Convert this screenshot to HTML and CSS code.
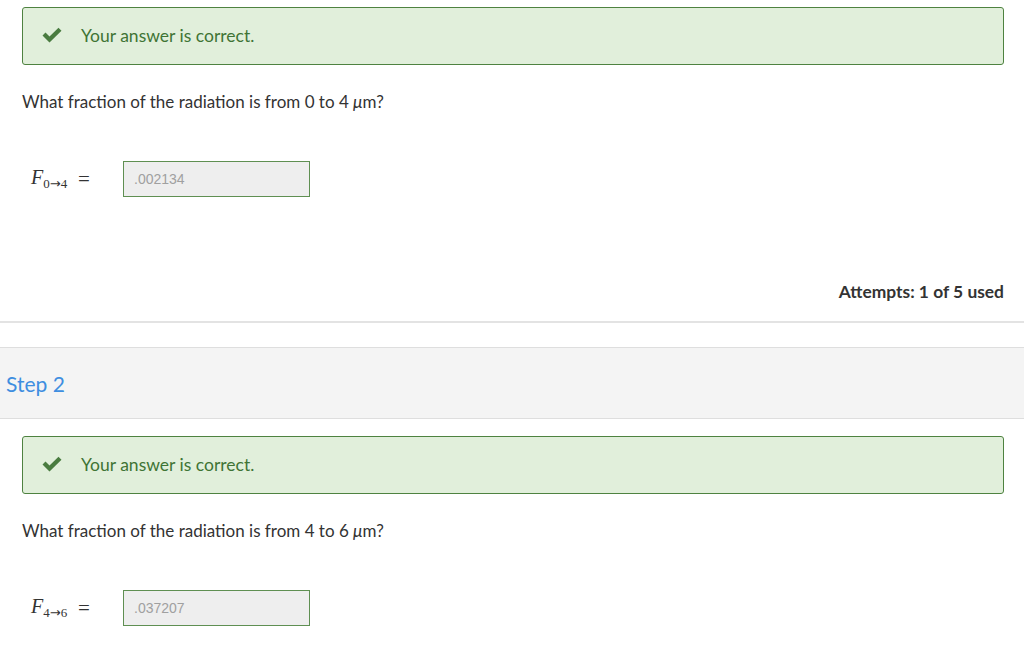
FILE: index.html
```html
<!DOCTYPE html>
<html>
<head>
<meta charset="utf-8">
<link rel="stylesheet" href="styles.css">
</head>
<body>
<div class="part">
  <div class="alert">
    <svg class="check" width="22" height="16" viewBox="0 0 22 16"><path d="M1.5 8.5 L4.5 5.5 L8.5 9.5 L17.5 0.8 L20.5 3.8 L8.5 15.5 Z" fill="#4a7c40"/></svg>
    <span>Your answer is correct.</span>
  </div>
  <p class="q">What fraction of the radiation is from 0 to 4 <i>μ</i>m?</p>
  <div class="row">
    <span class="math"><i>F</i><sub>0<span class="arr">→</span>4</sub></span><span class="eq">=</span>
    <div class="input">.002134</div>
  </div>
  <div class="attempts">Attempts: 1 of 5 used</div>
</div>
<div class="sep"></div>
<div class="step">Step 2</div>
<div class="part part2">
  <div class="alert">
    <svg class="check" width="22" height="16" viewBox="0 0 22 16"><path d="M1.5 8.5 L4.5 5.5 L8.5 9.5 L17.5 0.8 L20.5 3.8 L8.5 15.5 Z" fill="#4a7c40"/></svg>
    <span>Your answer is correct.</span>
  </div>
  <p class="q">What fraction of the radiation is from 4 to 6 <i>μ</i>m?</p>
  <div class="row">
    <span class="math"><i>F</i><sub>4<span class="arr">→</span>6</sub></span><span class="eq">=</span>
    <div class="input">.037207</div>
  </div>
</div>
</body>
</html>
```
FILE: styles.css
```css
html, body { margin: 0; padding: 0; background: #fff; }
body { font-family: Lato, "Liberation Sans", sans-serif; color: #333; font-size: 17px; }
.part { padding: 7px 20px 0 22px; }
.alert {
  height: 56px;
  border: 1px solid #4e8240;
  border-radius: 3px;
  background: #e1efdb;
  display: flex;
  align-items: center;
  color: #3f7435;
  font-size: 17.5px;
}
.alert span { margin-top: -1px; }
.check { margin-left: 18px; margin-right: 18px; margin-top: -2px; }
.q { margin: 25px 0 0; line-height: 24px; height: 24px; }
.row { display: flex; align-items: center; margin-top: 47px; height: 36px; }
.math { font-family: "Liberation Serif", serif; font-size: 20px; color: #333; width: 47px; margin-left: 9px; white-space: nowrap; }
.math sub { font-size: 13px; font-style: normal; vertical-align: -4px; }
.math .arr { font-family: "DejaVu Sans", sans-serif; font-size: 13px; vertical-align: 0; }
.eq { font-family: "Liberation Serif", serif; font-size: 21px; width: 45px; }
.input {
  width: 175px; height: 34px;
  padding-left: 10px;
  border: 1px solid #5f8f52;
  background: #eeeeee;
  color: #a0a0a0;
  font-family: "Liberation Sans", Arial, sans-serif;
  font-size: 14px;
  line-height: 34px;
}
.attempts { text-align: right; font-weight: bold; font-size: 17.4px; margin-top: 83px; line-height: 24px; }
.sep { margin-top: 17px; border-top: 2px solid #e3e3e3; height: 24px; }
.step {
  background: #f4f4f4;
  border-top: 1px solid #dedede;
  border-bottom: 1px solid #dedede;
  height: 70px;
  line-height: 72px;
  color: #3e8ee0;
  font-size: 21px;
  padding-left: 6px;
}
.part2 { padding-top: 17px; }
```
